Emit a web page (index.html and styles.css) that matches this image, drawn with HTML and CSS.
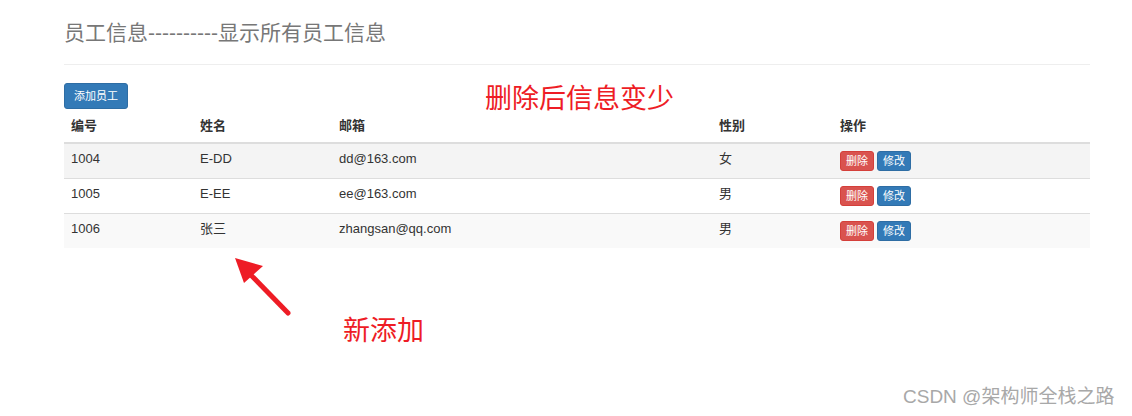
FILE: index.html
```html
<!DOCTYPE html>
<html lang="zh-CN">

<head>
  <meta charset="UTF-8">
  <meta name="viewport" content="width=device-width, initial-scale=1.0">
  <title>员工列表</title>
  <link rel="stylesheet" href="styles.css">
</head>

<body>
  <div class="container">
    <h1 class="page-title">员工信息----------显示所有员工信息</h1>
    <hr class="divider">
    <button class="btn btn-add">添加员工</button>
    <table class="emp-table">
      <thead>
        <tr>
          <th class="col-id">编号</th>
          <th class="col-name">姓名</th>
          <th class="col-email">邮箱</th>
          <th class="col-gender">性别</th>
          <th>操作</th>
        </tr>
      </thead>
      <tbody>
        <tr class="row-hover">
          <td>1004</td>
          <td>E-DD</td>
          <td>dd@163.com</td>
          <td>女</td>
          <td>
            <div class="ops">
              <button class="btn btn-xs btn-danger">删除</button>
              <button class="btn btn-xs btn-primary">修改</button>
            </div>
          </td>
        </tr>
        <tr>
          <td>1005</td>
          <td>E-EE</td>
          <td>ee@163.com</td>
          <td>男</td>
          <td>
            <div class="ops">
              <button class="btn btn-xs btn-danger">删除</button>
              <button class="btn btn-xs btn-primary">修改</button>
            </div>
          </td>
        </tr>
        <tr class="row-striped">
          <td>1006</td>
          <td>张三</td>
          <td>zhangsan@qq.com</td>
          <td>男</td>
          <td>
            <div class="ops">
              <button class="btn btn-xs btn-danger">删除</button>
              <button class="btn btn-xs btn-primary">修改</button>
            </div>
          </td>
        </tr>
      </tbody>
    </table>
  </div>

  <!-- 截图上的标注 -->
  <div class="note note-delete">删除后信息变少</div>
  <svg class="arrow" width="80" height="80" viewBox="0 0 80 80">
    <line x1="58" y1="58" x2="16" y2="15" stroke="#ee1c25" stroke-width="5" stroke-linecap="round"/>
    <polygon points="5,3 33,11 14,28" fill="#ee1c25"/>
  </svg>
  <div class="note note-add">新添加</div>
  <div class="watermark">CSDN @架构师全栈之路</div>
</body>

</html>
```

FILE: styles.css
```css
* {
  margin: 0;
  padding: 0;
  box-sizing: border-box;
}

body {
  font-family: "Liberation Sans", "Noto Sans CJK SC", sans-serif;
  font-size: 13px;
  color: #333;
  background: #fff;
}

.container {
  width: 1026px;
  margin-left: 64px;
}

.page-title {
  margin-top: 18px;
  font-size: 21px;
  line-height: 30px;
  font-weight: normal;
  color: #777;
}

.divider {
  border: 0;
  border-top: 1px solid #eee;
  margin: 16px 0 18px;
}

.btn {
  display: inline-block;
  font-family: "Liberation Sans", "Noto Sans CJK SC", sans-serif;
  color: #fff;
  border: 1px solid transparent;
  border-radius: 3px;
  cursor: pointer;
}

.btn-add {
  font-size: 11px;
  line-height: 24px;
  padding: 0 9px;
  background: #337ab7;
  border-color: #2e6da4;
}

.btn-xs {
  font-size: 11px;
  line-height: 16px;
  padding: 1px 5px;
}

.btn-danger {
  background: #d9534f;
  border-color: #d43f3a;
}

.btn-primary {
  background: #337ab7;
  border-color: #2e6da4;
}

.emp-table {
  width: 100%;
  margin-top: 1px;
  border-collapse: collapse;
}

.emp-table th {
  text-align: left;
  font-weight: bold;
  padding: 7px;
  line-height: 18px;
  border-bottom: 2px solid #ddd;
}

.emp-table td {
  padding: 6px 7px 10px;
  line-height: 18px;
  height: 34px;
  border-top: 1px solid #ddd;
  vertical-align: top;
}

.emp-table tbody tr:first-child td {
  border-top: 0;
}

.ops {
  display: flex;
  gap: 3px;
  height: 17px;
  margin-top: 1px;
  align-items: flex-start;
}

.col-id { width: 129px; }
.col-name { width: 139px; }
.col-email { width: 380px; }
.col-gender { width: 121px; }

.row-hover {
  background: #f4f4f4;
}

.row-striped {
  background: #f9f9f9;
}

.note {
  position: absolute;
  font-family: "Noto Sans CJK SC", sans-serif;
  font-size: 27px;
  line-height: 36px;
  color: #ee1c25;
}

.note-delete {
  left: 485px;
  top: 79px;
}

.note-add {
  left: 343px;
  top: 311px;
}

.arrow {
  position: absolute;
  left: 230px;
  top: 255px;
}

.watermark {
  position: absolute;
  left: 903px;
  top: 384px;
  font-family: "Liberation Sans", "Noto Sans CJK SC", sans-serif;
  font-size: 19px;
  line-height: 26px;
  color: #a8a8a8;
}
```
